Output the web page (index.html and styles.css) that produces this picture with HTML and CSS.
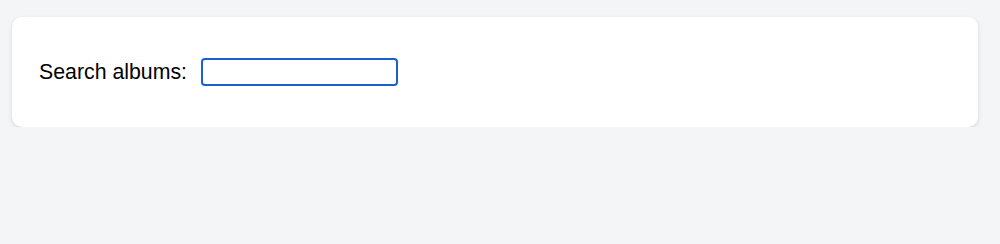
FILE: index.html
```html
<!DOCTYPE html>
<html>
<head>
<meta charset="utf-8">
<link rel="stylesheet" href="styles.css">
</head>
<body>
<div class="card">
  <label class="search-label" for="q">Search albums:</label>
  <input class="search-input" id="q" type="text">
</div>
</body>
</html>
```
FILE: styles.css
```css
html, body {
  margin: 0;
  background: #f4f5f7;
}
body {
  padding: 17px 22px 0 12px;
  font-family: "Liberation Sans", Arial, sans-serif;
}
.card {
  background: #fff;
  border-radius: 10px;
  box-shadow: 0 2px 5px rgba(0,0,0,0.12);
  height: 110px;
  box-sizing: border-box;
  padding: 0 27px;
  display: flex;
  align-items: center;
  gap: 14px;
}
.search-label {
  font-size: 21.3px;
  color: #000;
}
.search-input {
  width: 197px;
  height: 28px;
  box-sizing: border-box;
  border: 2px solid #1a5fcc;
  border-radius: 4px;
  outline: none;
  padding: 2px 6px;
  font-size: 16px;
  margin-top: -1px;
}
```
